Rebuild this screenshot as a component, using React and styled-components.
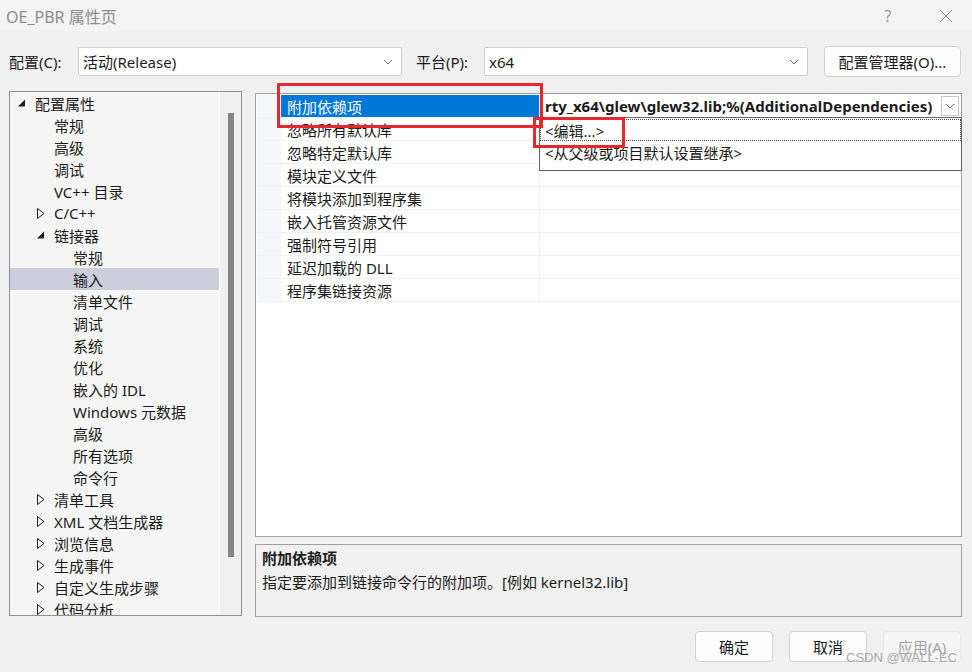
import React from 'react';
import styled, { createGlobalStyle } from 'styled-components';

const GlobalStyle = createGlobalStyle`
    html, body {
        margin: 0;
        padding: 0;
        background: #f0f0f0;
    }
    body {
        font-family: "Noto Sans", "Noto Sans CJK SC", sans-serif;
        font-size: 15px;
        color: #1b1b1b;
    }
`;

const Window = styled.div`
    width: 972px;
    height: 672px;
    display: flex;
    flex-direction: column;
    background: #f0f0f0;
    position: relative;
    overflow: hidden;
`;

const TitleBar = styled.div`
    height: 31px;
    background: #f3f3f3;
    display: flex;
    align-items: center;
    padding-left: 6px;
    color: #8c8c8c;
    font-size: 16px;
    .title {
        flex: 1;
    }
    .caption {
        width: 52px;
        margin-left: 6px;
        display: flex;
        justify-content: center;
        align-items: center;
        color: #9a9a9a;
    }
`;

const ConfigRow = styled.div`
    margin-top: 15px;
    height: 31px;
    display: flex;
    align-items: center;
    padding-left: 9px;
`;

const Label = styled.span`
    width: ${(p) => p.$w}px;
    white-space: nowrap;
`;

const Select = styled.div`
    width: ${(p) => p.$w}px;
    height: 29px;
    box-sizing: border-box;
    background: #fff;
    border: 1px solid #cdcdcd;
    border-radius: 2px;
    display: flex;
    align-items: center;
    padding: 0 8px 0 4px;
    margin-right: ${(p) => p.$mr || 0}px;
    span {
        flex: 1;
    }
`;

const Button = styled.div`
    width: ${(p) => p.$w}px;
    height: 31px;
    box-sizing: border-box;
    background: ${(p) => (p.$disabled ? '#f5f5f5' : '#fdfdfd')};
    border: 1px solid ${(p) => (p.$disabled ? '#e6e6e6' : '#d0d0d0')};
    border-radius: 4px;
    color: ${(p) => (p.$disabled ? '#a3a3a3' : '#1b1b1b')};
    display: flex;
    align-items: center;
    justify-content: center;
    white-space: nowrap;
`;

const Main = styled.div`
    display: flex;
    margin-top: 14px;
    padding-left: 9px;
    gap: 13px;
`;

const TreePanel = styled.div`
    width: 233px;
    height: 525px;
    box-sizing: border-box;
    border: 1px solid #8d9097;
    display: flex;
    overflow: hidden;
`;

const TreeList = styled.div`
    width: 209px;
    background: #f5f5f5;
    border-right: 1px solid #ffffff;
`;

const TreeRow = styled.div`
    height: 22px;
    display: flex;
    align-items: center;
    padding-left: ${(p) => 8 + p.$level * 19}px;
    background: ${(p) => (p.$selected ? '#cccedb' : 'transparent')};
    white-space: nowrap;
    .arrow {
        width: 17px;
        display: flex;
        align-items: center;
    }
`;

const ScrollTrack = styled.div`
    flex: 1;
    background: #f0f0f0;
    display: flex;
    justify-content: center;
    padding-top: 21px;
`;

const ScrollThumb = styled.div`
    width: 6px;
    height: 444px;
    background: #858585;
`;

const RightColumn = styled.div`
    width: 707px;
    display: flex;
    flex-direction: column;
    gap: 7px;
    padding-top: 2px;
`;

const GridPanel = styled.div`
    height: 444px;
    box-sizing: border-box;
    border: 1px solid #a0a0a0;
    background: #fff;
    padding: 1px 1px 0 1px;
    position: relative;
`;

const GridRow = styled.div`
    height: 23px;
    display: flex;
    box-sizing: border-box;
    border-bottom: 1px solid #eef1f6;
    .gutter {
        width: 24px;
        background: #f4f6fa;
    }
`;

const NameCell = styled.div`
    width: 258px;
    box-sizing: border-box;
    padding-left: 6px;
    display: flex;
    align-items: center;
    background: ${(p) => (p.$selected ? '#0078d7' : '#fff')};
    color: ${(p) => (p.$selected ? '#fff' : '#1b1b1b')};
    white-space: nowrap;
`;

const ValueCell = styled.div`
    flex: 1;
    border-left: 1px solid #eef1f6;
    display: flex;
    align-items: center;
    padding-left: 5px;
    font-weight: ${(p) => (p.$bold ? 700 : 400)};
    white-space: nowrap;
    overflow: hidden;
    .text {
        flex: 1;
        overflow: hidden;
    }
`;

const DropButton = styled.div`
    width: 18px;
    height: 20px;
    box-sizing: border-box;
    border: 1px solid #c8c8c8;
    background: #fff;
    display: flex;
    align-items: center;
    justify-content: center;
    margin-right: 1px;
    flex-shrink: 0;
`;

const DropList = styled.div`
    position: absolute;
    left: 283px;
    top: 23px;
    width: 423px;
    height: 54px;
    box-sizing: border-box;
    background: #fff;
    border: 1px solid #646464;
    padding: 1px 0 0 0;
`;

const DropItem = styled.div`
    height: 22px;
    box-sizing: border-box;
    display: flex;
    align-items: center;
    padding-left: 4px;
    border: 1px ${(p) => (p.$focus ? 'dotted #4a4a4a' : 'solid transparent')};
    white-space: nowrap;
`;

const DescPanel = styled.div`
    height: 73px;
    box-sizing: border-box;
    border: 1px solid #a0a0a0;
    background: #f0f0f0;
    padding: 1px 6px 0;
    line-height: 24px;
    .head {
        font-weight: 700;
    }
`;

const Footer = styled.div`
    display: flex;
    justify-content: flex-end;
    gap: 16px;
    padding: 14px 11px 0 0;
`;

const Mark = styled.div`
    position: absolute;
    border: 3px solid #e8262d;
    left: ${(p) => p.$x}px;
    top: ${(p) => p.$y}px;
    width: ${(p) => p.$w}px;
    height: ${(p) => p.$h}px;
    box-sizing: border-box;
    pointer-events: none;
`;

const Watermark = styled.div`
    position: absolute;
    right: 15px;
    bottom: 7px;
    font-family: "Liberation Sans", Arial, sans-serif;
    font-size: 13px;
    color: #a8a8a8;
`;

const Chevron = () => (
    <svg width="10" height="6" viewBox="0 0 10 6">
        <path d="M1 1 L5 5 L9 1" fill="none" stroke="#6b6b6b" strokeWidth="1" />
    </svg>
);

const Expanded = () => (
    <svg width="8" height="8" viewBox="0 0 8 8">
        <path d="M7 0.5 L7 7.5 L0 7.5 Z" fill="#1e1e1e" />
    </svg>
);

const Collapsed = () => (
    <svg width="8" height="11" viewBox="0 0 8 11">
        <path d="M0.5 0.5 L7 5.5 L0.5 10.5 Z" fill="none" stroke="#1e1e1e" strokeWidth="1" />
    </svg>
);

const tree = [
    { label: '配置属性', level: 0, open: true },
    { label: '常规', level: 1 },
    { label: '高级', level: 1 },
    { label: '调试', level: 1 },
    { label: 'VC++ 目录', level: 1 },
    { label: 'C/C++', level: 1, open: false },
    { label: '链接器', level: 1, open: true },
    { label: '常规', level: 2 },
    { label: '输入', level: 2, selected: true },
    { label: '清单文件', level: 2 },
    { label: '调试', level: 2 },
    { label: '系统', level: 2 },
    { label: '优化', level: 2 },
    { label: '嵌入的 IDL', level: 2 },
    { label: 'Windows 元数据', level: 2 },
    { label: '高级', level: 2 },
    { label: '所有选项', level: 2 },
    { label: '命令行', level: 2 },
    { label: '清单工具', level: 1, open: false },
    { label: 'XML 文档生成器', level: 1, open: false },
    { label: '浏览信息', level: 1, open: false },
    { label: '生成事件', level: 1, open: false },
    { label: '自定义生成步骤', level: 1, open: false },
    { label: '代码分析', level: 1, open: false },
];

const props = [
    '附加依赖项',
    '忽略所有默认库',
    '忽略特定默认库',
    '模块定义文件',
    '将模块添加到程序集',
    '嵌入托管资源文件',
    '强制符号引用',
    '延迟加载的 DLL',
    '程序集链接资源',
];

const App = () => {
    return (
        <>
            <GlobalStyle />
            <Window>
                <TitleBar>
                    <span className="title">OE_PBR 属性页</span>
                    <span className="caption">?</span>
                    <span className="caption">
                        <svg width="14" height="14" viewBox="0 0 14 14">
                            <path d="M1 1 L13 13 M13 1 L1 13" stroke="#8a8a8a" strokeWidth="1" />
                        </svg>
                    </span>
                </TitleBar>

                <ConfigRow>
                    <Label $w={69}>配置(C):</Label>
                    <Select $w={324} $mr={14}>
                        <span>活动(Release)</span>
                        <Chevron />
                    </Select>
                    <Label $w={68}>平台(P):</Label>
                    <Select $w={324} $mr={16}>
                        <span>x64</span>
                        <Chevron />
                    </Select>
                    <Button $w={137}>配置管理器(O)...</Button>
                </ConfigRow>

                <Main>
                    <TreePanel>
                        <TreeList>
                            {tree.map((n, i) => (
                                <TreeRow key={i} $level={n.level} $selected={n.selected}>
                                    <span className="arrow">
                                        {n.open === true && <Expanded />}
                                        {n.open === false && <Collapsed />}
                                    </span>
                                    {n.label}
                                </TreeRow>
                            ))}
                        </TreeList>
                        <ScrollTrack>
                            <ScrollThumb />
                        </ScrollTrack>
                    </TreePanel>

                    <RightColumn>
                        <GridPanel>
                            {props.map((p, i) => (
                                <GridRow key={p}>
                                    <div className="gutter" />
                                    <NameCell $selected={i === 0}>{p}</NameCell>
                                    <ValueCell $bold={i === 0}>
                                        {i === 0 && (
                                            <>
                                                <span className="text">rty_x64\glew\glew32.lib;%(AdditionalDependencies)</span>
                                                <DropButton>
                                                    <Chevron />
                                                </DropButton>
                                            </>
                                        )}
                                    </ValueCell>
                                </GridRow>
                            ))}
                            <DropList>
                                <DropItem $focus>&lt;编辑...&gt;</DropItem>
                                <DropItem>&lt;从父级或项目默认设置继承&gt;</DropItem>
                            </DropList>
                        </GridPanel>
                        <DescPanel>
                            <div className="head">附加依赖项</div>
                            <div>指定要添加到链接命令行的附加项。[例如 kernel32.lib]</div>
                        </DescPanel>
                    </RightColumn>
                </Main>

                <Footer>
                    <Button $w={78}>确定</Button>
                    <Button $w={78}>取消</Button>
                    <Button $w={78} $disabled>应用(A)</Button>
                </Footer>

                <Mark $x={277} $y={83} $w={266} $h={45} />
                <Mark $x={533} $y={117} $w={92} $h={31} />
                <Watermark>CSDN @WALL-EC</Watermark>
            </Window>
        </>
    );
};

export default App;
